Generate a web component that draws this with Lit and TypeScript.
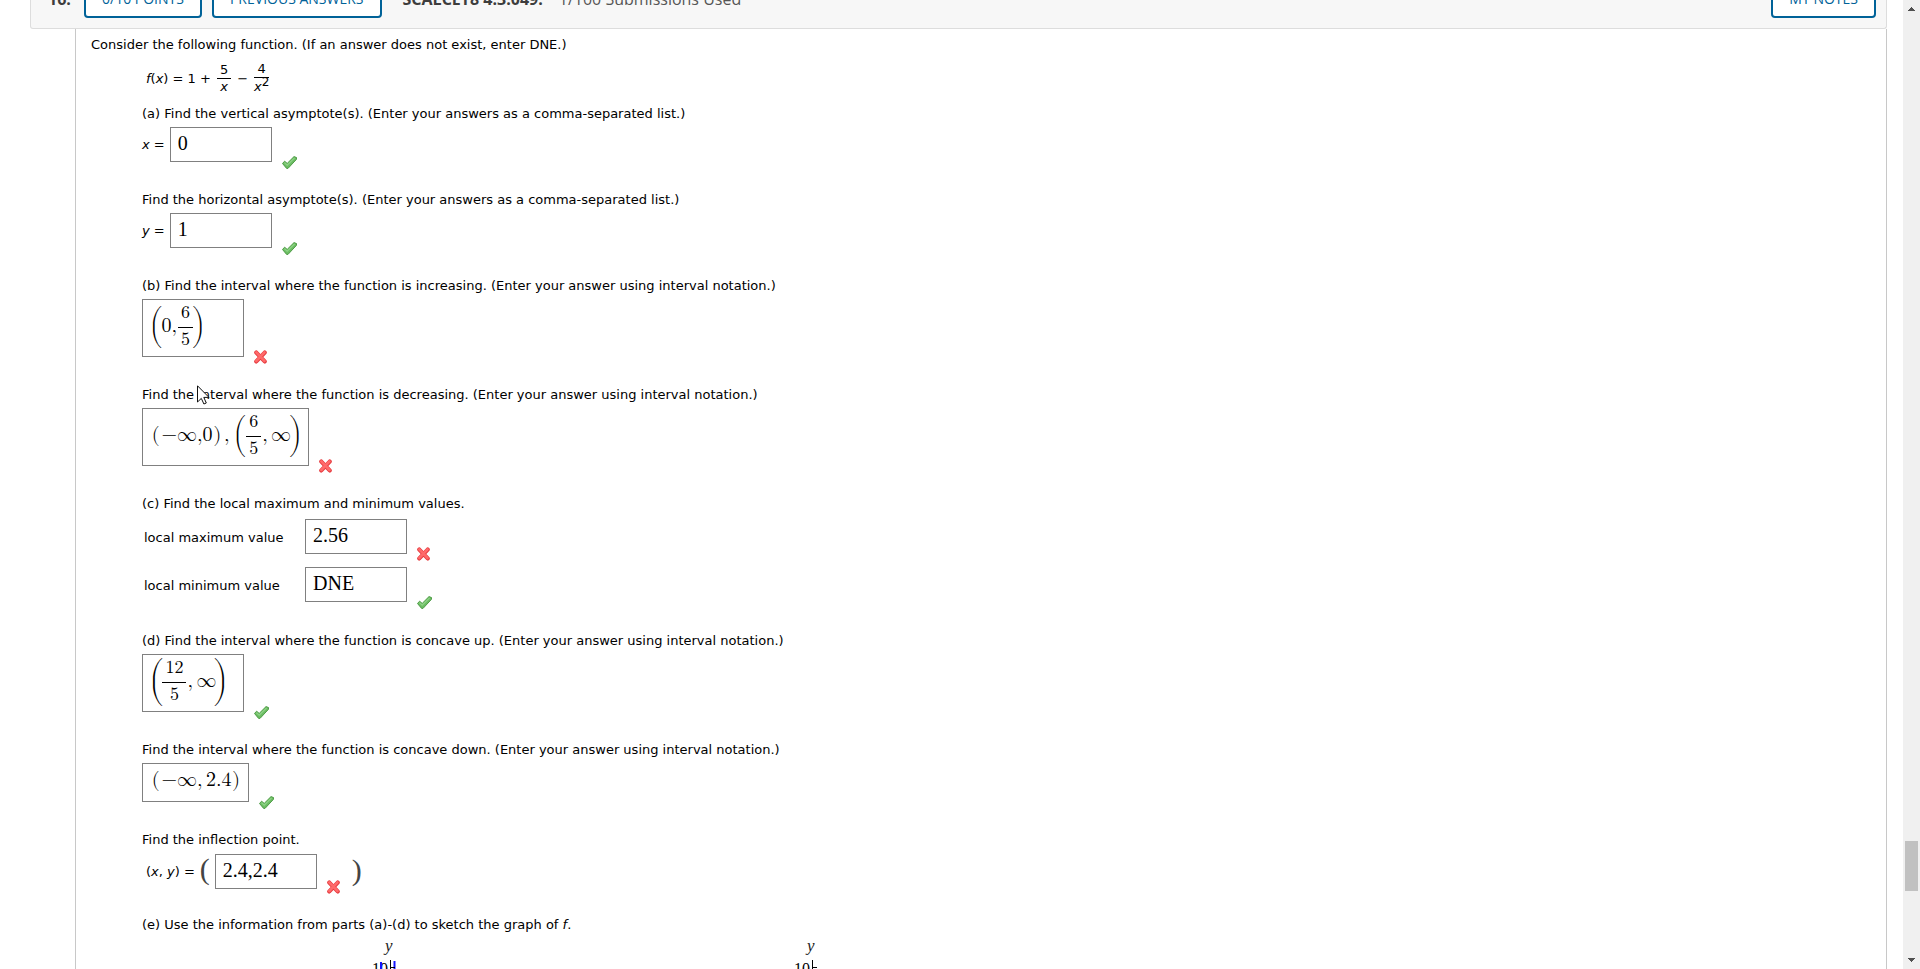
import { LitElement, html, css } from "lit";
import { customElement, property } from "lit/decorators.js";

type Mark = "right" | "wrong";

@customElement("status-mark")
class StatusMark extends LitElement {
  @property() kind: Mark = "right";

  static styles = css`
    :host {
      display: block;
      flex: none;
      width: 15px;
    }
    svg {
      display: block;
    }
  `;

  render() {
    return this.kind === "right"
      ? html`<svg width="15" height="13" viewBox="0 0 15 13" role="img" aria-label="Correct">
          <path d="M0.5 7.5 L2.6 5.2 L5.2 7.4 L12 0.6 L14.6 1.6 L14.4 3.4 L6 12.4 L4.6 12.4 Z" fill="#6cbd63" stroke="#4f9c47" stroke-width="1" stroke-linejoin="round" />
          <path d="M2.4 6.6 L5.2 9.2 L12.6 1.8" fill="none" stroke="#8fd487" stroke-width="1.2" />
        </svg>`
      : html`<svg width="13" height="14" viewBox="0 0 13 14" role="img" aria-label="Incorrect">
          <path d="M2.3 2.6 L10.7 11.4 M10.7 2.6 L2.3 11.4" stroke="#e63c40" stroke-width="4.2" stroke-linecap="round" />
          <path d="M2.3 2.4 L10.5 11 M10.5 2.4 L2.3 11" stroke="#ff6a6a" stroke-width="2.6" stroke-linecap="round" />
        </svg>`;
  }
}

@customElement("app-root")
class AppRoot extends LitElement {
  static styles = css`
    :host {
      display: flex;
      height: 100vh;
      overflow: hidden;
      background: #fff;
      color: #000;
      font-family: "DejaVu Sans", Verdana, sans-serif;
      font-size: 13px;
      line-height: 18px;
    }
    .page {
      flex: 1;
      min-width: 0;
      display: flex;
      flex-direction: column;
      padding: 0 16px 0 30px;
      overflow: hidden;
    }
    .bar {
      flex: none;
      height: 29px;
      box-sizing: border-box;
      display: flex;
      align-items: flex-end;
      padding: 0 10px 10px 17px;
      background: #f7f7f7;
      border: 1px solid #ddd;
      border-top: 0;
      border-radius: 0 0 3px 3px;
      font-family: "Open Sans", sans-serif;
      font-size: 16px;
      line-height: 38px;
      color: #3d3d3d;
    }
    .bar .number {
      width: 36px;
      font-weight: 700;
    }
    .bar .code {
      margin-left: 11px;
      font-weight: 700;
    }
    .bar .used {
      margin-left: 16px;
      color: #555;
    }
    .bar button {
      flex: none;
      height: 36px;
      box-sizing: border-box;
      margin-right: 10px;
      padding: 0 16px 2px;
      border: 2px solid #006298;
      border-radius: 4px;
      background: #fff;
      color: #006298;
      font: 400 14px/30px "Open Sans", sans-serif;
    }
    .bar .notes {
      margin: 0 0 0 auto;
    }
    .panel {
      flex: 1;
      margin-left: 45px;
      border: solid #c8c8c8;
      border-width: 0 1px;
      padding: 7px 15px 0;
    }
    p {
      margin: 0;
    }
    .parts {
      display: flex;
      flex-direction: column;
      gap: 22px;
      padding-left: 51px;
    }
    .part {
      display: flex;
      flex-direction: column;
      gap: 4px;
    }
    .formula {
      display: flex;
      align-items: center;
      height: 51px;
      padding: 0 0 2px 55px;
      box-sizing: border-box;
      gap: 6px;
    }
    .ratio {
      display: flex;
      flex-direction: column;
      align-items: center;
      line-height: 16px;
    }
    .ratio span:first-child {
      align-self: stretch;
      text-align: center;
      border-bottom: 1px solid #000;
      padding: 0 3px;
    }
    .ratio sup {
      font-size: 12px;
      line-height: 8px;
    }
    .row {
      display: flex;
      align-items: flex-end;
      gap: 10px;
    }
    .row > label,
    .row > .field {
      margin-bottom: 7px;
    }
    .lead {
      display: flex;
      align-items: center;
      gap: 5px;
    }
    .field {
      flex: none;
      box-sizing: border-box;
      width: 102px;
      height: 35px;
      padding: 0 7px 2px;
      border: 1px solid #808080;
      background: #fff;
      color: #000;
      font: 20px/30px "Liberation Serif", "Times New Roman", serif;
      outline: 0;
    }
    .math {
      width: auto;
      min-width: 102px;
      height: 58px;
      display: flex;
      align-items: center;
      padding: 0 5px 3px;
    }
    .math.short {
      height: 39px;
    }
    math {
      font-family: "Latin Modern Math", "STIX Two Math", "DejaVu Math TeX Gyre", "Liberation Serif", serif;
      font-size: 20px;
    }
    mfrac > mn {
      font-size: 18px;
      padding: 0 3px;
    }
    .open {
      margin: 0 -3px 0 -1px;
    }
    .close {
      margin: 0 -2px 0 -4px;
    }
    .values {
      display: grid;
      grid-template-columns: 161px auto;
      justify-content: start;
      row-gap: 6px;
      padding: 2px 2px 1px;
    }
    .values > label {
      align-self: center;
      padding-bottom: 4px;
    }
    .point {
      padding: 1px 0 0 4px;
    }
    .row.point > .lead,
    .row.point > .paren {
      margin-bottom: 5px;
    }
    .paren {
      padding-bottom: 6px;
      font: 30px/26px "Liberation Serif", serif;
      color: #444;
    }
    .graphs {
      display: flex;
      font-family: "Liberation Serif", serif;
    }
    .graphs svg {
      flex: none;
      overflow: visible;
    }
    .track {
      flex: none;
      width: 17px;
      background: #f0f0f0;
      display: flex;
      flex-direction: column;
      align-items: center;
    }
    .track .above {
      flex: 841;
    }
    .track .thumb {
      width: 13px;
      height: 50px;
      background: #c1c1c1;
    }
    .track .below {
      flex: 78;
    }
    .up,
    .down {
      position: absolute;
      right: 5px;
    }
    .up {
      top: 7px;
    }
    .down {
      bottom: 7px;
    }
    .cursor {
      position: absolute;
      left: 197px;
      top: 385px;
    }
  `;

  render() {
    return html`
      <main class="page">
        <header class="bar">
          <span class="number">16.</span>
          <button>0/10 POINTS</button>
          <button>PREVIOUS ANSWERS</button>
          <span class="code">SCALCET8 4.3.049.</span>
          <span class="used">1/100 Submissions Used</span>
          <button class="notes">MY NOTES</button>
        </header>
        <section class="panel">
          <p>Consider the following function. (If an answer does not exist, enter DNE.)</p>
          <div class="formula">
            <span><i>f</i>(<i>x</i>) = 1 +</span>
            <span class="ratio"><span>5</span><span><i>x</i></span></span>
            <span>−</span>
            <span class="ratio"><span>4</span><span><i>x</i><sup>2</sup></span></span>
          </div>
          <div class="parts">
            <div class="part">
              <p>(a) Find the vertical asymptote(s). (Enter your answers as a comma-separated list.)</p>
              <div class="row">
                <label class="lead"><span><i>x</i> =</span><input class="field" value="0" /></label>
                <status-mark kind="right"></status-mark>
              </div>
            </div>
            <div class="part">
              <p>Find the horizontal asymptote(s). (Enter your answers as a comma-separated list.)</p>
              <div class="row">
                <label class="lead"><span><i>y</i> =</span><input class="field" value="1" /></label>
                <status-mark kind="right"></status-mark>
              </div>
            </div>
            <div class="part">
              <p>(b) Find the interval where the function is increasing. (Enter your answer using interval notation.)</p>
              <div class="row">
                <div class="field math" role="textbox" tabindex="0" aria-label="Increasing interval">
                  <math displaystyle="true"><mrow><mo class="open">(</mo><mn>0</mn><mo rspace="0">,</mo><mfrac><mn>6</mn><mn>5</mn></mfrac><mo class="close">)</mo></mrow></math>
                </div>
                <status-mark kind="wrong"></status-mark>
              </div>
            </div>
            <div class="part">
              <p>Find the interval where the function is decreasing. (Enter your answer using interval notation.)</p>
              <div class="row">
                <div class="field math" role="textbox" tabindex="0" aria-label="Decreasing interval">
                  <math displaystyle="true"><mrow><mo class="open">(</mo><mo form="prefix" lspace="0" rspace="0">−</mo><mi>∞</mi><mo rspace="0">,</mo><mn>0</mn><mo class="close">)</mo></mrow><mo rspace="2px">,</mo><mrow><mo class="open">(</mo><mfrac><mn>6</mn><mn>5</mn></mfrac><mo>,</mo><mi>∞</mi><mo class="close">)</mo></mrow></math>
                </div>
                <status-mark kind="wrong"></status-mark>
              </div>
            </div>
            <div class="part">
              <p>(c) Find the local maximum and minimum values.</p>
              <div class="values">
                <label for="max">local maximum value</label>
                <div class="row"><input id="max" class="field" value="2.56" /><status-mark kind="wrong"></status-mark></div>
                <label for="min">local minimum value</label>
                <div class="row"><input id="min" class="field" value="DNE" /><status-mark kind="right"></status-mark></div>
              </div>
            </div>
            <div class="part">
              <p>(d) Find the interval where the function is concave up. (Enter your answer using interval notation.)</p>
              <div class="row">
                <div class="field math" role="textbox" tabindex="0" aria-label="Concave up interval">
                  <math displaystyle="true"><mrow><mo class="open">(</mo><mfrac><mn>12</mn><mn>5</mn></mfrac><mo>,</mo><mi>∞</mi><mo class="close">)</mo></mrow></math>
                </div>
                <status-mark kind="right"></status-mark>
              </div>
            </div>
            <div class="part">
              <p>Find the interval where the function is concave down. (Enter your answer using interval notation.)</p>
              <div class="row">
                <div class="field math short" role="textbox" tabindex="0" aria-label="Concave down interval">
                  <math><mrow><mo class="open">(</mo><mo form="prefix" lspace="0" rspace="0">−</mo><mi>∞</mi><mo>,</mo><mn>2.4</mn><mo class="close">)</mo></mrow></math>
                </div>
                <status-mark kind="right"></status-mark>
              </div>
            </div>
            <div class="part">
              <p>Find the inflection point.</p>
              <div class="row point">
                <label class="lead"><span>(<i>x</i>, <i>y</i>) =</span><span class="paren">(</span><input class="field" value="2.4,2.4" /></label>
                <status-mark kind="wrong"></status-mark>
                <span class="paren">)</span>
              </div>
            </div>
            <div class="part">
              <p>(e) Use the information from parts (a)-(d) to sketch the graph of <i>f</i>.</p>
              <div class="graphs">
                <svg width="422" height="300" viewBox="0 0 422 300" role="img" aria-label="First graph">
                  <text x="243" y="13" font-size="17" font-style="italic" fill="#222">y</text>
                  <text x="230" y="36" font-size="16">10</text>
                  <path d="M239 24 V300 M252.500 23 V300" stroke="#1414ff" stroke-width="2" />
                  <path d="M248.500 22 V300 M248 29.500 H253" stroke="#000" fill="none" />
                </svg>
                <svg width="422" height="300" viewBox="0 0 422 300" role="img" aria-label="Second graph">
                  <text x="243" y="13" font-size="17" font-style="italic" fill="#222">y</text>
                  <text x="230" y="36" font-size="16">10</text>
                  <path d="M248.500 22 V300 M248 29.500 H253" stroke="#000" fill="none" />
                </svg>
              </div>
            </div>
          </div>
        </section>
      </main>
      <div class="track" aria-hidden="true">
        <span class="above"></span><span class="thumb"></span><span class="below"></span>
        <svg class="up" width="7" height="4" viewBox="0 0 7 4"><path d="M3 0h1v1h1v1h1v1h1v1H0V3h1V2h1V1h1z" fill="#505050" /></svg>
        <svg class="down" width="7" height="4" viewBox="0 0 7 4"><path d="M3 4h1V3h1V2h1V1h1V0H0v1h1v1h1v1h1z" fill="#505050" /></svg>
      </div>
      <svg class="cursor" width="13" height="20" viewBox="0 0 13 20" aria-hidden="true">
        <path d="M0.500 0.800 V17 L4.300 13.400 L6.900 19 L9.300 18 L6.800 12.400 H12 Z" fill="#fff" stroke="#111" />
      </svg>
    `;
  }
}
